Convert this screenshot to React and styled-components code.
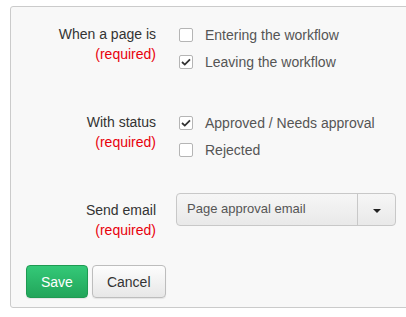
import React from 'react'
import styled, { createGlobalStyle } from 'styled-components'

const GlobalStyle = createGlobalStyle`
  html, body {
    margin: 0;
    padding: 0;
    background: #fff;
    overflow: hidden;
  }
  body {
    font-family: "Liberation Sans", Arial, sans-serif;
    font-size: 14px;
    color: #333;
  }
`

const Panel = styled.form`
  margin: 6px 0 0 10px;
  width: 420px;
  background: #f8f8f8;
  border: 1px solid #cbcbcb;
  border-radius: 3px;
  padding: 14px 0 9px 0;
  box-sizing: border-box;
`

const Group = styled.div`
  display: grid;
  grid-template-columns: 165px 1fr;
  margin-bottom: ${p => p.$space || 0}px;
`

const Label = styled.div`
  text-align: right;
  padding-right: 20px;
  padding-top: ${p => p.$top || 3}px;
  line-height: 20px;
  color: #333;
`

const Required = styled.div`
  color: #e8000b;
`

const Options = styled.div`
  display: flex;
  flex-direction: column;
`

const Option = styled.label`
  display: flex;
  align-items: center;
  height: 27px;
  padding-left: 3px;
  color: #555;
`

const Box = styled.span`
  width: 14px;
  height: 14px;
  box-sizing: border-box;
  border: 1px solid #b5b5b5;
  border-radius: 2px;
  background: #fff;
  margin-right: 12px;
  display: flex;
  align-items: center;
  justify-content: center;
`

const Select = styled.div`
  display: flex;
  width: 220px;
  height: 33px;
  box-sizing: border-box;
  border: 1px solid #c8c8c8;
  border-radius: 4px;
  background: linear-gradient(#f6f6f6, #e9e9e9);
  font-size: 13px;
  color: #555;
`

const SelectValue = styled.div`
  flex: 1;
  display: flex;
  align-items: center;
  padding-left: 10px;
  padding-bottom: 2px;
`

const Caret = styled.div`
  width: 37px;
  border-left: 1px solid #c8c8c8;
  display: flex;
  align-items: center;
  justify-content: center;
  &::after {
    content: '';
    border-left: 4px solid transparent;
    border-right: 4px solid transparent;
    border-top: 4px solid #222;
    margin-top: 2px;
  }
`

const Actions = styled.div`
  display: flex;
  gap: 4px;
  margin-top: 25px;
  padding-left: 15px;
`

const Button = styled.button`
  height: 33px;
  padding: 0 14px;
  font-family: inherit;
  font-size: 14px;
  border-radius: 4px;
  border: 1px solid ${p => (p.$primary ? '#1f9a52' : '#bdbdbd')};
  background: ${p =>
    p.$primary
      ? 'linear-gradient(#34c978, #22a55a)'
      : 'linear-gradient(#fdfdfd, #e7e7e7)'};
  color: ${p => (p.$primary ? '#fff' : '#333')};
  box-shadow: 0 1px 1px rgba(0, 0, 0, 0.08);
`

const Check = () => (
  <svg width="10" height="8" viewBox="0 0 10 8">
    <path d="M1 4 L3.8 6.6 L9 1.4" fill="none" stroke="#333" strokeWidth="1.8" />
  </svg>
)

const CheckOption = ({ checked, children }) => (
  <Option>
    <Box>{checked && <Check />}</Box>
    {children}
  </Option>
)

export default function App() {
  return (
    <>
      <GlobalStyle />
      <Panel>
        <Group $space={34}>
          <Label>
            When a page is
            <Required>(required)</Required>
          </Label>
          <Options>
            <CheckOption>Entering the workflow</CheckOption>
            <CheckOption checked>Leaving the workflow</CheckOption>
          </Options>
        </Group>
        <Group $space={30}>
          <Label>
            With status
            <Required>(required)</Required>
          </Label>
          <Options>
            <CheckOption checked>Approved / Needs approval</CheckOption>
            <CheckOption>Rejected</CheckOption>
          </Options>
        </Group>
        <Group>
          <Label $top={7}>
            Send email
            <Required>(required)</Required>
          </Label>
          <div>
            <Select>
              <SelectValue>Page approval email</SelectValue>
              <Caret />
            </Select>
          </div>
        </Group>
        <Actions>
          <Button type="button" $primary>Save</Button>
          <Button type="button">Cancel</Button>
        </Actions>
      </Panel>
    </>
  )
}
